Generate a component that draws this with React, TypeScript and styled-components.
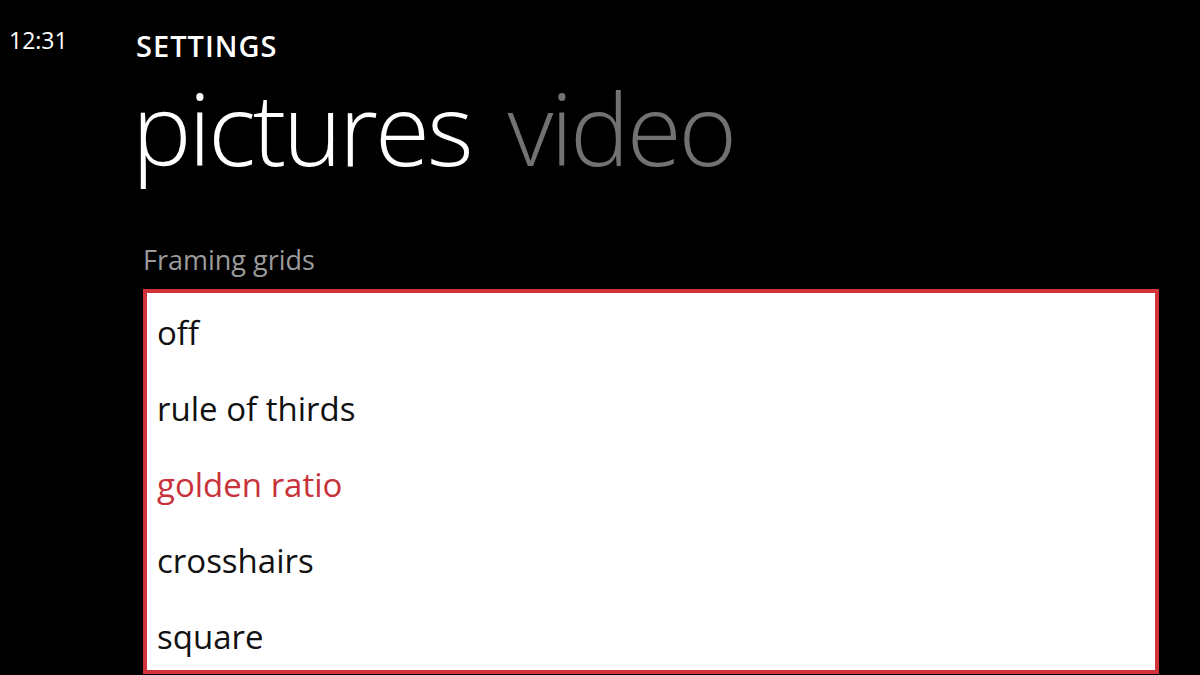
import styled, { createGlobalStyle } from "styled-components";

const GlobalStyle = createGlobalStyle`
  html, body {
    margin: 0;
    padding: 0;
    background: #000000;
  }
  body {
    font-family: "Open Sans", "Noto Sans", sans-serif;
    color: #ffffff;
  }
`;

const Screen = styled.div`
  width: 1200px;
  height: 675px;
  overflow: hidden;
  display: flex;
  background: #000000;
`;

const StatusBar = styled.div`
  width: 127px;
  padding: 24px 0 0 9px;
  font-size: 23px;
  line-height: 32px;
  font-weight: 400;
  color: #ffffff;
`;

const Main = styled.div`
  flex: 1;
  padding: 26px 41px 0 0;
  display: flex;
  flex-direction: column;
`;

const AppTitle = styled.h1`
  margin: 0;
  font-size: 29px;
  line-height: 40px;
  font-weight: 600;
  letter-spacing: 1px;
`;

const Pivot = styled.div`
  margin: 11px 0 0 -4px;
  display: flex;
  gap: 37px;
  font-size: 100px;
  line-height: 100px;
  font-weight: 300;
  letter-spacing: -3px;
  white-space: nowrap;
`;

const PivotItem = styled.span<{ $active?: boolean }>`
  display: block;
  height: 100px;
  color: ${(p) => (p.$active ? "#ffffff" : "#727272")};
`;

const Section = styled.div`
  margin: 65px 0 0 7px;
  display: flex;
  flex-direction: column;
`;

const Label = styled.div`
  font-size: 27px;
  line-height: 36px;
  color: #9b9b9b;
`;

const Picker = styled.ul`
  margin: 11px 0 0 0;
  padding: 2px 0 0 10px;
  list-style: none;
  box-sizing: border-box;
  height: 385px;
  overflow: hidden;
  background: #ffffff;
  border: 4px solid #d0343a;
`;

const Option = styled.li<{ $selected?: boolean }>`
  height: 76px;
  font-size: 33px;
  line-height: 76px;
  color: ${(p) => (p.$selected ? "#c8323a" : "#111111")};
`;

const options = ["off", "rule of thirds", "golden ratio", "crosshairs", "square"];

const App = () => {
  return (
    <>
      <GlobalStyle />
      <Screen>
        <StatusBar>12:31</StatusBar>
        <Main>
          <AppTitle>SETTINGS</AppTitle>
          <Pivot>
            <PivotItem $active>pictures</PivotItem>
            <PivotItem>video</PivotItem>
          </Pivot>
          <Section>
            <Label>Framing grids</Label>
            <Picker>
              {options.map((o) => (
                <Option key={o} $selected={o === "golden ratio"}>
                  {o}
                </Option>
              ))}
            </Picker>
          </Section>
        </Main>
      </Screen>
    </>
  );
};

export default App;
